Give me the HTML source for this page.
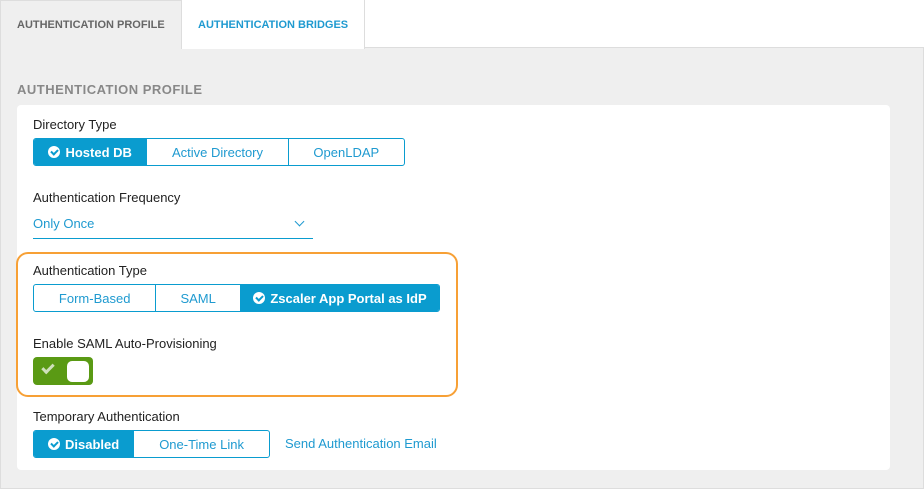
<!DOCTYPE html>
<html><head><style>
*{box-sizing:border-box;margin:0;padding:0}
body{width:924px;height:489px;background:#fff;font-family:"Liberation Sans",Arial,sans-serif;position:relative;overflow:hidden}
.a{position:absolute}
.lbl{position:absolute;font-size:13px;color:#222}
.seg{position:absolute;display:flex;border:1px solid #0a9ccf;border-radius:3px;height:28px;overflow:hidden}
.seg div{display:flex;align-items:center;justify-content:center;font-size:13px;color:#1f9ad0;border-right:1px solid #0a9ccf}
.seg div:last-child{border-right:none}
.seg .on{background:#0a9ccf;color:#fff;font-weight:bold}
.ck{display:inline-block;width:12px;height:12px;border-radius:50%;background:#fff;margin-right:5px;position:relative}
.ck:after{content:"";position:absolute;left:3px;top:2.5px;width:5px;height:3px;border-left:2px solid #0a9ccf;border-bottom:2px solid #0a9ccf;transform:rotate(-45deg)}
</style></head><body>
<div class="a" style="left:0;top:0;width:924px;height:489px;background:#efefef;border:1px solid #ddd"></div>
<div class="a" style="left:181px;top:0;width:743px;height:48px;background:#fff;border-bottom:1px solid #ddd"></div>
<div class="a" style="left:181px;top:0;width:184px;height:49px;background:#fff;border-left:1px solid #ddd;border-right:1px solid #ddd"></div>
<div class="a" style="left:17px;top:19px;font-size:11px;font-weight:bold;color:#666">AUTHENTICATION PROFILE</div>
<div class="a" style="left:198px;top:19px;font-size:11px;font-weight:bold;color:#1f9ad0">AUTHENTICATION BRIDGES</div>
<div class="a" style="left:17px;top:82px;font-size:13px;color:#777;letter-spacing:0.5px;font-weight:bold;opacity:0.85">AUTHENTICATION PROFILE</div>
<div class="a" style="left:17px;top:105px;width:873px;height:365px;background:#fff;border-radius:4px"></div>
<div class="lbl" style="left:33px;top:117px">Directory Type</div>
<div class="seg" style="left:33px;top:138px;width:372px"><div class="on" style="width:114px"><span class="ck"></span>Hosted DB</div><div style="width:142px">Active Directory</div><div style="width:116px">OpenLDAP</div></div>
<div class="lbl" style="left:33px;top:190px">Authentication Frequency</div>
<div class="a" style="left:33px;top:216px;font-size:13px;color:#1f9ad0">Only Once</div>
<div class="a" style="left:296px;top:218px;width:7px;height:7px;border-right:1.5px solid #1f9ad0;border-bottom:1.5px solid #1f9ad0;transform:rotate(45deg)"></div>
<div class="a" style="left:33px;top:238px;width:280px;height:1px;background:#0a9ccf"></div>
<div class="a" style="left:16px;top:252px;width:442px;height:145px;border:2px solid #f7a035;border-radius:12px"></div>
<div class="lbl" style="left:33px;top:263px">Authentication Type</div>
<div class="seg" style="left:33px;top:284px;width:407px"><div style="width:123px">Form-Based</div><div style="width:85px">SAML</div><div class="on" style="width:199px"><span class="ck"></span>Zscaler App Portal as IdP</div></div>
<div class="lbl" style="left:33px;top:336px">Enable SAML Auto-Provisioning</div>
<div class="a" style="left:33px;top:357px;width:60px;height:28px;background:#5a9a14;border-radius:4px"></div>
<div class="a" style="left:42px;top:364px;width:12px;height:7px;border-left:3px solid #cfe0bb;border-bottom:3px solid #cfe0bb;transform:rotate(-45deg)"></div>
<div class="a" style="left:67px;top:361px;width:22px;height:21px;background:#fff;border-radius:5px"></div>
<div class="lbl" style="left:33px;top:409px">Temporary Authentication</div>
<div class="seg" style="left:33px;top:430px;width:237px"><div class="on" style="width:101px"><span class="ck"></span>Disabled</div><div style="width:136px">One-Time Link</div></div>
<div class="a" style="left:285px;top:436px;font-size:13px;color:#1f9ad0">Send Authentication Email</div>
</body></html>
